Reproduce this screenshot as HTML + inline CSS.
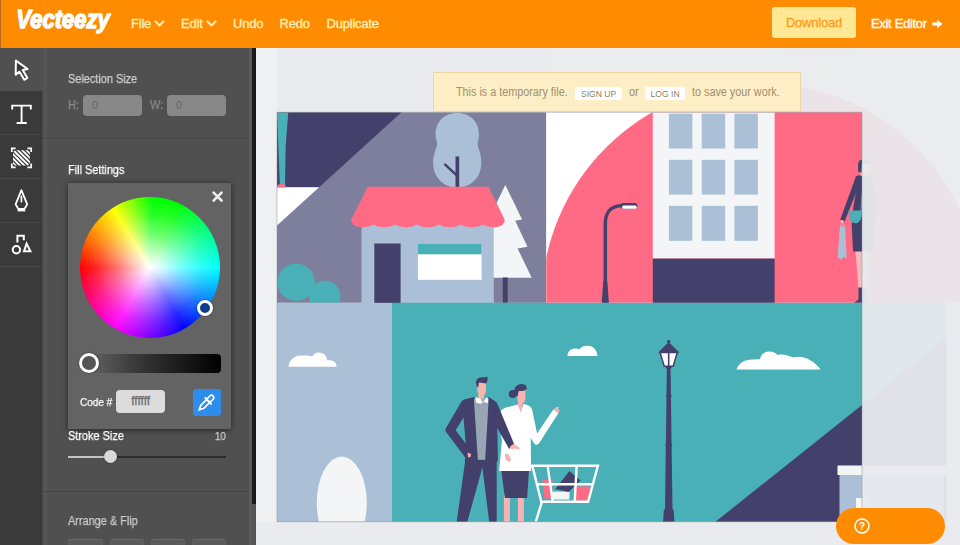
<!DOCTYPE html>
<html lang="en">
<head>
<meta charset="utf-8">
<title>Vecteezy Editor</title>
<style>
*{box-sizing:border-box;margin:0;padding:0}
html,body{width:960px;height:545px;overflow:hidden}
body{position:relative;background:#e9ebee;font-family:"Liberation Sans",Arial,sans-serif;font-size:13px;color:#fff}
.abs{position:absolute}
#header{position:absolute;left:0;top:0;width:960px;height:48px;background:#ff8b00}
#header .edge{position:absolute;left:0;top:0;width:1px;height:48px;background:#b86a10}
.menu{-webkit-text-stroke:0.35px #fff0b8;position:absolute;top:16px;height:16px;line-height:16px;font-size:13px;color:#fff0b8;white-space:nowrap;letter-spacing:-0.2px}
.menu svg{position:absolute;top:4px}
#download{-webkit-text-stroke:0.3px #ff9a1c;position:absolute;left:772px;top:7px;width:84px;height:31px;background:#ffe794;border-radius:3px;color:#ff9a1c;font-size:13px;line-height:31px;text-align:center;letter-spacing:-0.2px}
#exit{-webkit-text-stroke:0.35px #fff;position:absolute;left:871px;top:16px;height:16px;line-height:16px;font-size:13px;color:#fff;white-space:nowrap;letter-spacing:-0.32px}
#toolbar{position:absolute;left:0;top:48px;width:43px;height:497px;background:#3a3a3a;border-right:1.5px solid #464646}
#tstrip{position:absolute;left:43px;top:48px;width:3.5px;height:497px;background:#555}
.tool{position:absolute;left:0;width:43px;height:44px;border-bottom:1px solid #474747}
.tool.sel{background:#505050;border-bottom:none}
.tool svg{position:absolute;left:0;top:0}
#panel{position:absolute;left:43px;top:48px;width:206px;height:497px;background:#505050}
#sbtrack{position:absolute;left:249px;top:48px;width:3px;height:497px;background:#5b5b5b}
#sbthumb{position:absolute;left:252px;top:48px;width:3.5px;height:456px;background:#1b1b1b}
#sbrest{position:absolute;left:252px;top:504px;width:3.5px;height:41px;background:#555}
.lbl{will-change:transform;-webkit-text-stroke:0.25px currentColor;position:absolute;white-space:nowrap;font-size:12px;line-height:14px;transform:scaleX(.91);transform-origin:0 0}
.sep{position:absolute;left:43px;width:206px;height:1px;background:#474747}
.inp{position:absolute;height:21px;background:#888;border-radius:4px;color:#666;font-size:11px;line-height:21px;padding-left:9px}
#picker{position:absolute;left:68px;top:183px;width:163px;height:246px;background:#636363;box-shadow:0 1px 6px rgba(0,0,0,.55)}
#wheel{position:absolute;left:12px;top:14px;width:140px;height:141px;border-radius:50%;background:radial-gradient(circle closest-side,#fff 0,rgba(255,255,255,.85) 14%,rgba(255,255,255,.45) 46%,rgba(255,255,255,.15) 76%,rgba(255,255,255,0) 100%),conic-gradient(from 270deg,#f00 0deg,#ff0 58deg,#0f0 92deg,#0f0 114deg,#0ff 180deg,#00f 240deg,#f0f 300deg,#f00 360deg)}
#whandle{position:absolute;left:129px;top:117px;width:16px;height:16px;border-radius:50%;border:3px solid #fff;background:#0c3d8f;box-shadow:0 0 2px rgba(0,0,0,.6)}
#bbar{position:absolute;left:12px;top:170.5px;width:140.5px;height:19.5px;border-radius:4px;background:linear-gradient(90deg,#6a6a6a 0,#333 45%,#000 100%)}
#bhandle{position:absolute;left:11px;top:170px;width:20px;height:20px;border-radius:50%;border:3px solid #fff;background:#555;box-shadow:0 0 2px rgba(0,0,0,.6)}
#code{position:absolute;left:48.3px;top:207px;width:48.7px;height:23.3px;border-radius:4px;background:#dcdcdc;color:#6c6c6c;font-size:12px;line-height:23.5px;text-align:center;-webkit-text-stroke:0.3px #6c6c6c}
#eyedrop{position:absolute;left:125px;top:205.5px;width:27.5px;height:27px;border-radius:3px;background:#2c8dec}
.abtn{position:absolute;top:538.5px;width:34.5px;height:10px;background:#5a5a5a;border-top:1px solid #6a6a6a;border-left:1px solid #606060;border-right:1px solid #606060;border-radius:2px 2px 0 0}
#note{position:absolute;left:177.5px;top:24px;width:368px;height:40px;background:#fdeec6;border:1px solid #ead7a3;font-size:12px;color:#9d916c}
#note span,#note b{position:absolute;top:12px;line-height:14px;white-space:nowrap;transform:scaleX(.9);transform-origin:0 0}
#note b{top:13.5px;height:13px;line-height:13.5px;background:#fff;border-radius:2px;font-weight:normal;font-size:9.5px;text-align:center;color:#8d8260;transform:none}
#note b i{display:inline-block;font-style:normal;transform:scaleX(.9)}
#help{position:absolute;left:580.5px;top:460px;width:109px;height:36px;border-radius:18px;background:#ff8b00}
#canvas{position:absolute;left:255.5px;top:48px;width:704.5px;height:497px;background:#e9ebee;overflow:hidden}
</style>
</head>
<body>
<div id="canvas">
<svg class="abs" style="left:0;top:0" width="704.5" height="497" viewBox="255.5 48 704.5 497">
<defs>
<clipPath id="ab"><rect x="276.5" y="112.3" width="585" height="409.4"/></clipPath>
<clipPath id="wp"><rect x="545.8" y="40" width="420" height="262.8"/></clipPath>
<clipPath id="top"><rect x="276.5" y="100" width="700" height="202.8"/></clipPath>
<g id="art">
 <!-- upper left block -->
 <rect x="276.5" y="112.3" width="269.3" height="190.5" fill="#7d7f9c"/>
 <polygon points="276.5,112.3 401,112.3 318.6,187.2 276.5,187.2" fill="#43406b"/>
 <polygon points="276.5,187.2 318.6,187.2 276.5,225.6" fill="#ffffff"/>
 <polygon points="276.5,112.3 287.8,112.3 285.2,146 284.5,185 279.3,185" fill="#4ab0b8"/>
 <path d="M276.5 185.5 Q280 183 285.2 185 L285.2 187.6 L276.5 187.6Z" fill="#ff6b84"/>
 <!-- bush -->
 <g clip-path="url(#top)"><circle cx="295.7" cy="282.2" r="18.7" fill="#4ab0b8"/><circle cx="324.3" cy="296.5" r="15.7" fill="#4ab0b8"/></g>
 <!-- round tree -->
 <path d="M456.8 112.9 C470 112.9 478.4 122 478.4 134 C478.4 140 477.2 141 477.2 144 C477.2 148 480.8 153 480.8 162.5 C480.8 178 470 187.5 456.8 187.5 C443.5 187.5 432.6 178 432.6 162.5 C432.6 153 436.6 148 436.6 144 C436.6 141 435.1 140 435.1 134 C435.1 122 443.5 112.9 456.8 112.9Z" fill="#abc0d6"/>
 <rect x="455" y="156.5" width="3.7" height="31" fill="#43406b"/>
 <path d="M444.6 164.6 L456 175.2" stroke="#43406b" stroke-width="2.4" stroke-linecap="round"/>
 <!-- pine tree -->
 <polygon points="504.8,184.9 521.6,219.6 514.7,220.8 527,246.8 517.1,248.5 531.2,277.7 480,277.7 488,219.6" fill="#f4f5f7"/>
 <rect x="502.3" y="277.5" width="4.9" height="25.3" fill="#43406b"/>
 <!-- house -->
 <rect x="361" y="215" width="132.3" height="88" fill="#abc0d6"/>
 <rect x="373.8" y="243.5" width="26.3" height="59.5" fill="#43406b"/>
 <rect x="417.4" y="243.5" width="63.7" height="36.3" fill="#ffffff"/>
 <rect x="417.4" y="243.5" width="63.7" height="10.8" fill="#4ab0b8"/>
 <path d="M367.4 186.8 L488 186.8 L504.2 219.8 C504.5 224.8 499.2 227.3 493.24 227.3 C488.24 227.3 484.77 226.1 482.27 224.5 C479.77 226.1 476.31 227.3 471.31 227.3 C466.31 227.3 462.84 226.1 460.34 224.5 C457.84 226.1 454.38 227.3 449.38 227.3 C444.38 227.3 440.91 226.1 438.41 224.5 C435.91 226.1 432.45 227.3 427.45 227.3 C422.45 227.3 418.99 226.1 416.49 224.5 C413.99 226.1 410.52 227.3 405.52 227.3 C400.52 227.3 397.06 226.1 394.56 224.5 C392.06 226.1 388.59 227.3 383.59 227.3 C378.59 227.3 375.13 226.1 372.63 224.5 C370.13 226.1 366.66 227.3 361.66 227.3 C356.66 227.3 350.4 224.8 350.7 219.8 Z" fill="#ff6b84"/>
 <!-- white panel w/ pink circle -->
 <rect x="545.8" y="40" width="420" height="262.8" fill="#ffffff"/>
 <g clip-path="url(#wp)"><circle cx="760.6" cy="303" r="219.6" fill="#ff6b84"/></g>
 <!-- street lamp -->
 <path d="M604.8 302.8 L604.8 224 C604.8 212 609.5 206.4 621 205.4 L634 205.2" fill="none" stroke="#43406b" stroke-width="3.5"/>
 <path d="M601.2 302.8 L602.8 281 L606.8 281 L608.4 302.8Z" fill="#43406b"/>
 <rect x="620" y="202.9" width="17" height="5.8" rx="2.9" fill="#43406b"/>
 <rect x="621.6" y="205.6" width="14.6" height="3.1" rx="1.55" fill="#ffffff"/>
 <!-- building -->
 <rect x="652.3" y="100" width="121.8" height="158.6" fill="#f4f5f7"/>
 <rect x="652.3" y="258.6" width="121.8" height="44.2" fill="#43406b"/>
 <g fill="#abc0d6">
  <rect x="668.4" y="113.7" width="23.5" height="34.8"/><rect x="701.2" y="113.7" width="23.5" height="34.8"/><rect x="733.9" y="113.7" width="23.5" height="34.8"/>
  <rect x="668.4" y="159.8" width="23.5" height="34.8"/><rect x="701.2" y="159.8" width="23.5" height="34.8"/><rect x="733.9" y="159.8" width="23.5" height="34.8"/>
  <rect x="668.4" y="205.8" width="23.5" height="35"/><rect x="701.2" y="205.8" width="23.5" height="35"/><rect x="733.9" y="205.8" width="23.5" height="35"/>
 </g>
 <!-- woman right -->
 <g>
  <path d="M854.8 250 L868 250 L866 289 L858 289Z" fill="#f7b9bb"/>
  <path d="M858 287.6 L866 287.6 L867 302.8 L853.6 302.8 L858 299.4Z" fill="#43406b"/>
  <path d="M855.4 176.2 Q861 173.6 870 176 L876 200 L873 251.5 L852.6 251.5 L851.2 226 L853 206 L855.6 192Z" fill="#43406b"/>
  <path d="M855.6 176 L858.4 186 L843.8 222 L839.8 219.6Z" fill="#43406b"/>
  <circle cx="841.6" cy="221.6" r="1.7" fill="#f7b9bb"/>
  <rect x="860" y="168" width="5" height="8" fill="#f7b9bb"/>
  <ellipse cx="864" cy="165" rx="5.4" ry="7" fill="#f7b9bb"/>
  <path d="M858 172.2 Q856.6 162.6 859.4 160.2 Q864 157.4 870 160 L870 164 L861.4 164 L861 172.2Z" fill="#43406b"/>
  <path d="M848.2 210.6 L861.4 210.6 Q861.8 223.2 854.8 223.2 Q848.2 223.2 848.2 210.6Z" fill="#4ab0b8"/>
  <path d="M860.6 211 L861.6 194" stroke="#4ab0b8" stroke-width="1.2" fill="none"/>
  <path d="M839.4 226.6 L844.6 226.6 L846.2 258.6 L843.2 256.4 L841.2 259.6 L837.2 257.6Z" fill="#abc0d6"/>
  <path d="M839.8 227 Q841.8 220.6 844.2 227" stroke="#abc0d6" stroke-width="1" fill="none"/>
 </g>
 <!-- lower -->
 <rect x="276.5" y="302.8" width="114.7" height="219.2" fill="#abc0d6"/>
 <rect x="391.2" y="302.8" width="554.8" height="219.2" fill="#4ab0b8"/>
 <polygon points="861.5,405 946,337.9 946,522 714.7,522" fill="#43406b"/>
 <ellipse cx="341.3" cy="502.7" rx="25" ry="46.2" fill="#f4f5f7"/>
 <!-- clouds -->
 <path d="M288 366.7 C288.5 361 293 356 300 355.6 C305 355.3 309 355.6 311.8 356.6 C313 353.6 315.6 352.4 318.4 352.4 C323.4 352.4 326.4 356 326.8 360.4 C330 359.6 334.6 360.6 335.6 364 C336 365.4 336 366 335.9 366.7 Z" fill="#ffffff"/>
 <path d="M567 356 C567 352 570 348.6 574.4 348.5 C576.4 348.5 577.8 348.9 578.8 349.4 C580.6 346.8 583.6 345.7 587.2 345.7 C593 345.7 596.6 350.4 597 356 Z" fill="#ffffff"/>
 <path d="M735.8 369.6 C738 364 742.6 360.4 748.8 359.7 C752.6 359.2 756.4 359 759.4 359.3 C760.4 354.4 764 351.4 768.6 351.4 C772.4 351.4 775.4 352.8 777 355 C780 354.2 784 354.4 787 355.6 C789.4 356.4 791 357 792.6 357.4 C796 356.6 800 356.6 803 357.4 C808 358.6 812 361 815 364 C817.4 366.4 819.2 368 820.2 369.6 Z" fill="#ffffff"/>
 <!-- lamp post -->
 <g fill="#43406b">
  <polygon points="666.4,366 670,366 672,509.5 664.5,509.5"/>
  <path d="M662.6 522 L663.2 511 Q663.4 509 665 509 L671.5 509 Q673.2 509 673.3 511 L673.9 522Z"/>
  <rect x="664.9" y="444" width="6.8" height="2.6" rx="1"/>
  <rect x="665.3" y="394.7" width="5.8" height="2.4" rx="1"/>
  <rect x="665.2" y="366" width="6" height="2.6" rx="1"/>
  <path d="M657.6 352.4 L678.8 352.4 L669.6 343.6 L666.8 343.6Z"/>
  <circle cx="668.2" cy="341.6" r="1.7"/>
  <rect x="667.2" y="341.6" width="2" height="3"/>
  <path d="M658.6 352 L677.8 352 L673.2 367 L663.2 367Z"/>
 </g>
 <path d="M660.6 353.2 L667.4 353.2 L667.4 365.6 L664.3 365.6Z" fill="#ffffff"/><path d="M669 353.2 L675.8 353.2 L672.1 365.6 L669 365.6Z" fill="#ffffff"/>
 <!-- trash bin -->
 <rect x="839" y="474" width="104" height="48" fill="#abc0d6"/>
 <rect x="837" y="465.5" width="109" height="9.5" fill="#f4f5f7"/>
 <rect x="855.5" y="498" width="10" height="24" fill="#f4f5f7"/>
</g>
</defs>
<rect x="255.5" y="48" width="704.5" height="497" fill="#e9ebee"/>
<rect x="255.5" y="48" width="21" height="474" fill="#fff" opacity=".28"/><g opacity="0.048"><use href="#art"/></g>
<g clip-path="url(#ab)"><use href="#art"/><g id="people">
 <!-- cart -->
 <g>
  <polygon points="541.9,480 552,480 552,498.5 543.5,498.5" fill="#ff6b84"/>
  <polygon points="572.7,486.4 590,486.4 587,500.8 572.7,500.8" fill="#ff6b84"/>
  <polygon points="552,491.6 569,491.6 569,499.5 552,499.5" fill="#f4f5f7"/>
  <polygon points="568.9,471 580,480.5 568,492 554.7,489" fill="#43406b"/>
  <g fill="none" stroke="#ffffff" stroke-width="2.4" stroke-linejoin="miter">
   <path d="M529.8 465.8 L597.4 465.8 L587.6 501.8 L540.8 501.8 L531.8 465.8"/>
   <path d="M536.3 484.3 L592.4 484.3"/>
   <path d="M547.2 465.8 L552.2 501.8 M576.2 465.8 L574.2 501.8"/>
   <path d="M541.4 501.8 L535.2 522"/>
  </g>
 </g>
 <!-- woman -->
 <g>
  <rect x="503.4" y="495" width="6" height="28" fill="#f7b2b4"/><rect x="517.4" y="495" width="6" height="28" fill="#f7b2b4"/>
  <path d="M500.6 469 L528.6 469 L526.6 498 L504.4 498Z" fill="#43406b"/>
  <rect x="517.4" y="400" width="4.6" height="11" fill="#f7b2b4"/>
  <path d="M513.6 405.4 L517 404.4 L520.4 412.6 L523.2 403.8 L528.4 405.8 Q530.8 406.8 531.6 409.4 L536.6 433.6 L552.8 409.6 L558 413 L538.6 443.2 Q536.6 445.8 533.8 443.8 L530.2 438 L530.6 471 L498.6 471 L501.4 441 L498.4 418 Q498 410 505.4 407.6Z" fill="#ffffff"/>
  <path d="M553.2 409.4 L555.2 407.2 L558.8 406.8 L557.6 409 L559.2 411 L557.6 413.6Z" fill="#f7b2b4"/>
  <path d="M504.4 453.6 L508.4 454.6 L510.6 459.4 L508.6 462.2 L505 459.6Z" fill="#f7b2b4"/>
  <path d="M516.6 391 Q516 403.4 519.6 404.2 Q524.8 404.6 525 396.4 L524.8 389Z" fill="#f7b2b4"/>
  <circle cx="512.2" cy="394" r="4" fill="#43406b"/>
  <path d="M513.6 391.4 Q514.2 384.6 520.4 384 Q526 383.8 526.4 388.4 Q524.4 391.4 518.2 391 L517 396.4 Q514 395.4 513.6 391.4Z" fill="#43406b"/>
 </g>
 <!-- man -->
 <g>
  <path d="M464.8 460 L496.2 460 L496.2 523 L488.8 523 L481.9 467.5 L466.5 523 L456 523Z" fill="#43406b"/>
  <rect x="477.8" y="392" width="5.6" height="9" fill="#f7b5ae"/>
  <path d="M472.6 398.5 L488 398.5 L487 459 L477.6 459Z" fill="#98a6b4"/>
  <path d="M475 397 L480.5 399 L481.8 403 L485.8 397.6 L488 399 L487.2 403.2 L482 401.5 L480.6 403.8 L475.6 402.8Z" fill="#ffffff"/>
  <path d="M474 397 L473.4 399 L477.6 458.6 L469.5 458.6 L467.8 455.6 L470.2 452.5 L452.8 430 L466 412 L464.6 461.5 L474 461.5 L478 461.5 L473.6 399.5 Z" fill="none"/>
  <!-- jacket left half with arm -->
  <path d="M474.6 396.8 L463.6 399.4 Q461.6 400.2 460.4 402.4 L445.2 428.4 Q444.2 430.2 445.4 431.8 L464.6 457.2 L464.4 461.6 L477.4 461.6 L473.4 399.6Z" fill="#43406b"/>
  <path d="M463 417.5 L455.2 430.2 L465.2 443.6Z" fill="#4ab0b8"/>
  <path d="M467 452.6 L470.6 454 L470 457 L467.6 457.4Z" fill="#f7b5ae"/>
  <!-- jacket right half with arm -->
  <path d="M487.4 396.8 L494 400.8 Q496.4 402.4 497.4 405 L513.6 444 L508.6 449 L496.8 428 L497.4 461.6 L484.6 461.6 L488.2 399.6Z" fill="#43406b"/>
  <path d="M509.4 446.6 L513.4 443.8 L518.6 447.4 L519.6 450 L514.6 448.6 L510.8 449.6Z" fill="#f7b5ae"/>
  <!-- head -->
  <path d="M476.2 381.6 Q475.8 395 480.6 396.4 Q485.6 396.6 485.6 388 L485.4 381Z" fill="#f7b5ae"/>
  <path d="M475.4 382.6 Q476 377.8 480 377.4 L487 376.8 Q487.8 380 485.8 383.4 L478.4 382.6 L477.6 388 Q475.6 386.4 475.4 382.6Z" fill="#43406b"/>
 </g>
</g></g>
<rect x="276.5" y="112.3" width="585" height="409.4" fill="none" stroke="#8a8f98" stroke-opacity=".5" stroke-width="1"/>
</svg>
<div id="note"><span style="left:22px">This is a temporary file.</span><b style="left:141px;width:46.5px"><i>SIGN UP</i></b><span style="left:194.5px">or</span><b style="left:211px;width:40px"><i>LOG IN</i></b><span style="left:257.5px">to save your work.</span></div>
<div id="help"><svg width="18" height="18" viewBox="0 0 18 18" style="position:absolute;left:17px;top:9px"><circle cx="9" cy="9" r="7" fill="none" stroke="#fff" stroke-width="1.6"/><text x="9" y="13" text-anchor="middle" font-family="Liberation Sans, Arial, sans-serif" font-weight="bold" font-size="10.5" fill="#fff">?</text></svg></div>
</div>
<div id="header">
  <div class="edge"></div>
  <svg class="abs" style="left:10px;top:4px" width="110" height="40" viewBox="0 0 110 40"><text x="6.3" y="24.1" font-family="Liberation Sans, Arial, sans-serif" font-weight="bold" font-style="italic" font-size="26.5" fill="#fff" stroke="#fff" stroke-width="1.5" stroke-linejoin="round" textLength="93.5" lengthAdjust="spacingAndGlyphs">Vecteezy</text></svg>
  <div class="menu" style="left:131px">File<svg style="left:23px" width="11" height="8" viewBox="0 0 11 8"><path d="M1.5 1.5 L5.5 5.5 L9.5 1.5" fill="none" stroke="#fff0b8" stroke-width="2.2" stroke-linecap="round" stroke-linejoin="round"/></svg></div>
  <div class="menu" style="left:181px">Edit<svg style="left:25px" width="11" height="8" viewBox="0 0 11 8"><path d="M1.5 1.5 L5.5 5.5 L9.5 1.5" fill="none" stroke="#fff0b8" stroke-width="2.2" stroke-linecap="round" stroke-linejoin="round"/></svg></div>
  <div class="menu" style="left:233px">Undo</div>
  <div class="menu" style="left:279.5px">Redo</div>
  <div class="menu" style="left:326.5px">Duplicate</div>
  <div id="download">Download</div>
  <div id="exit">Exit Editor<svg style="position:absolute;left:60.5px;top:3px" width="11" height="10" viewBox="0 0 11 10"><path d="M0.4 3.6 L5.2 3.6 L5.2 0.8 L10.4 5 L5.2 9.2 L5.2 6.4 L0.4 6.4Z" fill="#fff"/></svg></div>
</div>
<div id="toolbar">
  <div class="tool sel" style="top:0;height:43.3px"><svg width="43" height="44" viewBox="0 0 43 44"><path d="M15.9 12.6 L15.7 26.8 L19.4 23.6 L24.3 31.8 L27.3 30 L22.7 22 L27.6 21 Z" fill="#3a3a3a" stroke="#fff" stroke-width="2" stroke-linejoin="round"/></svg></div>
  <div class="tool" style="top:43.3px"><svg width="43" height="44" viewBox="0 0 43 44"><path d="M12.2 18.6 L12.2 14.6 L30.8 14.6 L30.8 18.6 M21.6 14.6 L21.6 31.6 M16.6 32 L26.8 32" fill="none" stroke="#fff" stroke-width="1.9"/></svg></div>
  <div class="tool" style="top:87.3px"><svg width="43" height="44" viewBox="0 0 43 44"><defs><clipPath id="hc"><path d="M15 15.2 L27.8 15.2 L29.8 17.2 L29.8 28.4 L27.8 30.6 L15 30.6 L13 28.4 L13 17.2Z"/></clipPath></defs><g fill="none" stroke="#fff" stroke-width="1.7"><path d="M11.8 17 L11.8 13.4 L15.6 13.4 M27.4 13.4 L31.2 13.4 L31.2 17 M31.2 28.6 L31.2 32.4 L27.4 32.4 M15.6 32.4 L11.8 32.4 L11.8 28.6"/><g clip-path="url(#hc)" stroke-width="1.9"><path d="M-1 14 L17 32 M3.4 14 L21.4 32 M7.8 14 L25.8 32 M12.2 14 L30.2 32 M16.6 14 L34.6 32 M21 14 L39 32 M25.4 14 L43.4 32"/></g></g></svg></div>
  <div class="tool" style="top:131.3px"><svg width="43" height="44" viewBox="0 0 43 44"><g fill="none" stroke="#fff" stroke-width="1.8" stroke-linejoin="round"><path d="M21.4 11.2 L15.6 25.4 L18.4 30 L24.4 30 L27.2 25.4 Z"/><path d="M21.4 16.6 L21.4 23.4" stroke-width="1.7"/><path d="M17.6 31.4 L25.2 31.4" stroke-width="2"/></g></svg></div>
  <div class="tool" style="top:175.3px"><svg width="43" height="44" viewBox="0 0 43 44"><g fill="none" stroke="#fff" stroke-width="2" stroke-linejoin="miter"><path d="M17.4 19.4 L17.4 12.8 L23.8 12.8 L23.8 17.2"/><circle cx="16.4" cy="26.7" r="3.7"/><path d="M26.6 20.6 L30.4 28.2 L24 28.2 Z"/></g></svg></div>
</div>
<div id="panel"></div>
<div id="tstrip"></div><div id="sbtrack"></div><div id="sbthumb"></div><div id="sbrest"></div>
<div class="lbl" style="left:68px;top:71.7px;color:#d0d0d0">Selection Size</div>
<div class="lbl" style="left:68px;top:98px;color:#8a8a8a">H:</div>
<div class="inp" style="left:83px;top:95px;width:59px">0</div>
<div class="lbl" style="left:150px;top:98px;color:#8a8a8a">W:</div>
<div class="inp" style="left:167px;top:95px;width:59px">0</div>
<div class="sep" style="top:138px"></div>
<div class="lbl" style="left:68px;top:162.6px;color:#fff">Fill Settings</div>
<div id="picker">
  <div id="wheel"></div>
  <div id="whandle"></div>
  <svg class="abs" style="left:143px;top:7px" width="14" height="14" viewBox="0 0 14 14"><path d="M2.6 2.7 L10.6 10.7 M10.6 2.7 L2.6 10.7" stroke="#f0f0f0" stroke-width="2.6" stroke-linecap="round"/></svg>
  <div id="bbar"></div>
  <div id="bhandle"></div>
  <div class="lbl" style="left:12px;top:212px;color:#fff;font-size:11px">Code #</div>
  <div id="code">ffffff</div>
  <div id="eyedrop"><svg width="27" height="27" viewBox="0 0 27 27"><g transform="translate(13.1 14) rotate(45)" fill="none" stroke="#fff" stroke-width="1.7" stroke-linejoin="round" stroke-linecap="round"><path d="M-2.3 -3.2 L-2.3 -7.6 a2.3 2.3 0 0 1 4.6 0 L2.3 -3.2"/><path d="M-4 -3 L4 -3" stroke-width="2"/><path d="M-2.1 -2.4 L-2.1 5.4 L0 10 L2.1 5.4 L2.1 -2.4"/></g></svg></div>
</div>
<div class="lbl" style="left:68px;top:428.5px;color:#fff">Stroke Size</div>
<div class="lbl" style="left:196px;width:30px;text-align:right;top:428.5px;color:#ccc;font-size:11px;transform-origin:100% 0">10</div>
<div class="abs" style="left:68px;top:455.5px;width:43px;height:2px;background:#c4c4c4"></div>
<div class="abs" style="left:111px;top:455.5px;width:115px;height:2px;background:#2c2c2c"></div>
<div class="abs" style="left:104px;top:450px;width:13px;height:13px;border-radius:50%;background:#d9d9d9;box-shadow:0 0 2px rgba(0,0,0,.5)"></div>
<div class="sep" style="top:490.5px"></div>
<div class="lbl" style="left:68px;top:514px;color:#ccc">Arrange &amp; Flip</div>
<div class="abtn" style="left:68px"></div><div class="abtn" style="left:109.5px"></div><div class="abtn" style="left:150.5px"><div style="position:absolute;left:15.5px;top:5px;width:1px;height:2px;background:#bbb"></div></div><div class="abtn" style="left:191.5px"></div>
</body>
</html>
